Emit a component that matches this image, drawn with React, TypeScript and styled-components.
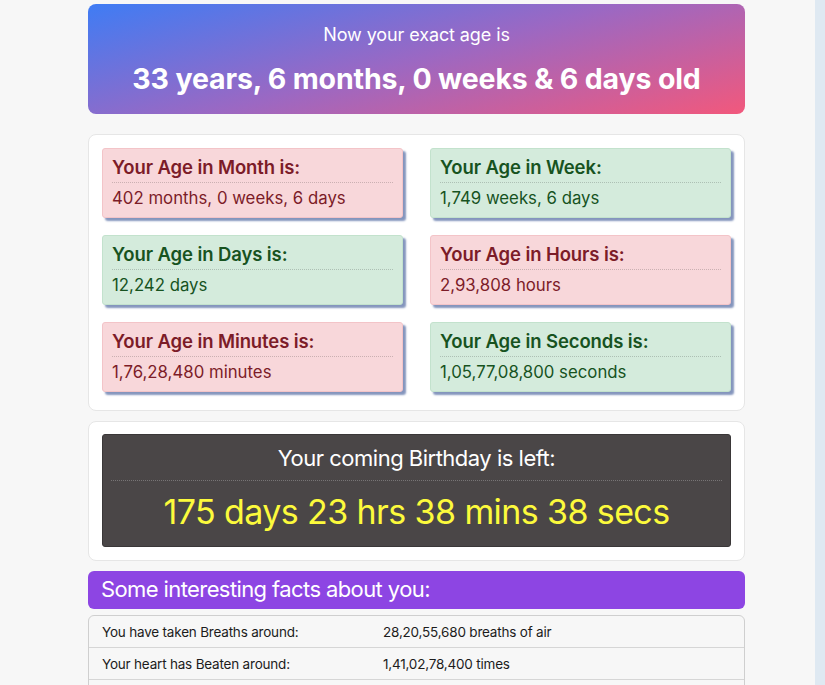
import React from 'react';
import styled, { createGlobalStyle } from 'styled-components';

const GlobalStyle = createGlobalStyle`
  html, body {
    margin: 0;
    padding: 0;
    background: #f7f7f7;
    font-family: Inter, "Noto Sans", sans-serif;
  }
`;

interface Stat {
  title: string;
  value: string;
  tone: 'red' | 'green';
}

const stats: Stat[] = [
  { title: 'Your Age in Month is:', value: '402 months, 0 weeks, 6 days', tone: 'red' },
  { title: 'Your Age in Week:', value: '1,749 weeks, 6 days', tone: 'green' },
  { title: 'Your Age in Days is:', value: '12,242 days', tone: 'green' },
  { title: 'Your Age in Hours is:', value: '2,93,808 hours', tone: 'red' },
  { title: 'Your Age in Minutes is:', value: '1,76,28,480 minutes', tone: 'red' },
  { title: 'Your Age in Seconds is:', value: '1,05,77,08,800 seconds', tone: 'green' },
];

const facts = [
  { label: 'You have taken Breaths around:', value: '28,20,55,680 breaths of air' },
  { label: 'Your heart has Beaten around:', value: '1,41,02,78,400 times' },
  { label: 'You have slept around:', value: '97,936 hours' },
];

const App = (): JSX.Element => (
  <Page>
    <GlobalStyle />
    <Main>
      <Container>
        <Hero>
          <HeroLead>Now your exact age is</HeroLead>
          <HeroAge>33 years, 6 months, 0 weeks &amp; 6 days old</HeroAge>
        </Hero>

        <Card>
          <StatGrid>
            {stats.map((s) => (
              <StatBox key={s.title} tone={s.tone}>
                <StatTitle>{s.title}</StatTitle>
                <StatValue>{s.value}</StatValue>
              </StatBox>
            ))}
          </StatGrid>
        </Card>

        <Card>
          <Countdown>
            <CountdownTitle>Your coming Birthday is left:</CountdownTitle>
            <CountdownValue>175 days 23 hrs 38 mins 38 secs</CountdownValue>
          </Countdown>
        </Card>

        <FactsHeader>Some interesting facts about you:</FactsHeader>
        <FactsTable>
          {facts.map((f) => (
            <FactRow key={f.label}>
              <FactLabel>{f.label}</FactLabel>
              <FactValue>{f.value}</FactValue>
            </FactRow>
          ))}
        </FactsTable>
      </Container>
    </Main>
    <ScrollTrack />
  </Page>
);

const Page = styled.div`
  display: flex;
  height: 685px;
  overflow: hidden;
`;

const Main = styled.main`
  flex: 1;
  padding: 4px 0 0 88px;
`;

const ScrollTrack = styled.div`
  width: 10px;
  flex-shrink: 0;
  background: #dfe9f2;
`;

const Container = styled.div`
  width: 657px;
  display: flex;
  flex-direction: column;
`;

const Hero = styled.section`
  height: 110px;
  box-sizing: border-box;
  border-radius: 8px;
  background: linear-gradient(165deg, #3f7cf4 0%, #9b68c3 50%, #f2587c 100%);
  color: #fff;
  text-align: center;
  padding-top: 20px;
`;

const HeroLead = styled.div`
  font-size: 18px;
  font-weight: 400;
  line-height: 22px;
  letter-spacing: -0.1px;
`;

const HeroAge = styled.div`
  margin-top: 16px;
  font-size: 28.5px;
  font-weight: 700;
  line-height: 34px;
  letter-spacing: -0.15px;
`;

const Card = styled.section`
  margin-top: 20px;
  background: #fff;
  border: 1px solid #e6e6e6;
  border-radius: 8px;
  padding: 13px 13px 18px;
  & + & {
    margin-top: 10px;
    padding: 12px 13px 13px;
  }
`;

const StatGrid = styled.div`
  display: grid;
  grid-template-columns: 301px 301px;
  column-gap: 27px;
  row-gap: 17px;
`;

const StatBox = styled.div<{ tone: 'red' | 'green' }>`
  height: 70px;
  box-sizing: border-box;
  padding: 6px 9px 0;
  border-radius: 3px;
  background: ${(p) => (p.tone === 'red' ? '#f8d7da' : '#d4ebdc')};
  border: 1px solid ${(p) => (p.tone === 'red' ? '#f3c4c8' : '#c3e2cd')};
  color: ${(p) => (p.tone === 'red' ? '#7c1c28' : '#17531f')};
  box-shadow: 3px 3px 2px #8495bd;
`;

const StatTitle = styled.div`
  font-size: 18.5px;
  font-weight: 600;
  line-height: 24px;
  letter-spacing: -0.1px;
  padding-bottom: 3px;
  border-bottom: 1px dotted rgba(0, 0, 0, 0.18);
`;

const StatValue = styled.div`
  font-size: 16.8px;
  line-height: 22px;
  margin-top: 4px;
`;

const Countdown = styled.div`
  background: #4a4647;
  border: 1px solid #3a3738;
  border-radius: 3px;
  padding: 9px 8px 13px;
  text-align: center;
`;

const CountdownTitle = styled.div`
  color: #fff;
  font-size: 22px;
  line-height: 28px;
  letter-spacing: -0.5px;
  padding-bottom: 8px;
  border-bottom: 1px dotted rgba(255, 255, 255, 0.25);
`;

const CountdownValue = styled.div`
  color: #fcfa3c;
  font-size: 34px;
  line-height: 42px;
  letter-spacing: -0.6px;
  margin-top: 10px;
`;

const FactsHeader = styled.div`
  margin-top: 10px;
  height: 38px;
  box-sizing: border-box;
  background: #8d45e3;
  color: #fff;
  border-radius: 6px;
  padding: 3px 13px 0;
  font-size: 22px;
  line-height: 30px;
  letter-spacing: -0.6px;
`;

const FactsTable = styled.div`
  margin-top: 6px;
  border: 1px solid #cfcfcf;
  border-radius: 6px;
  background: #f7f7f7;
`;

const FactRow = styled.div`
  display: grid;
  grid-template-columns: 281px 1fr;
  height: 31px;
  align-items: center;
  padding-left: 13px;
  font-size: 13.5px;
  letter-spacing: -0.2px;
  color: #1c1c1c;
  & + & {
    border-top: 1px solid #d6d6d6;
  }
`;

const FactLabel = styled.div``;

const FactValue = styled.div``;

export default App;
